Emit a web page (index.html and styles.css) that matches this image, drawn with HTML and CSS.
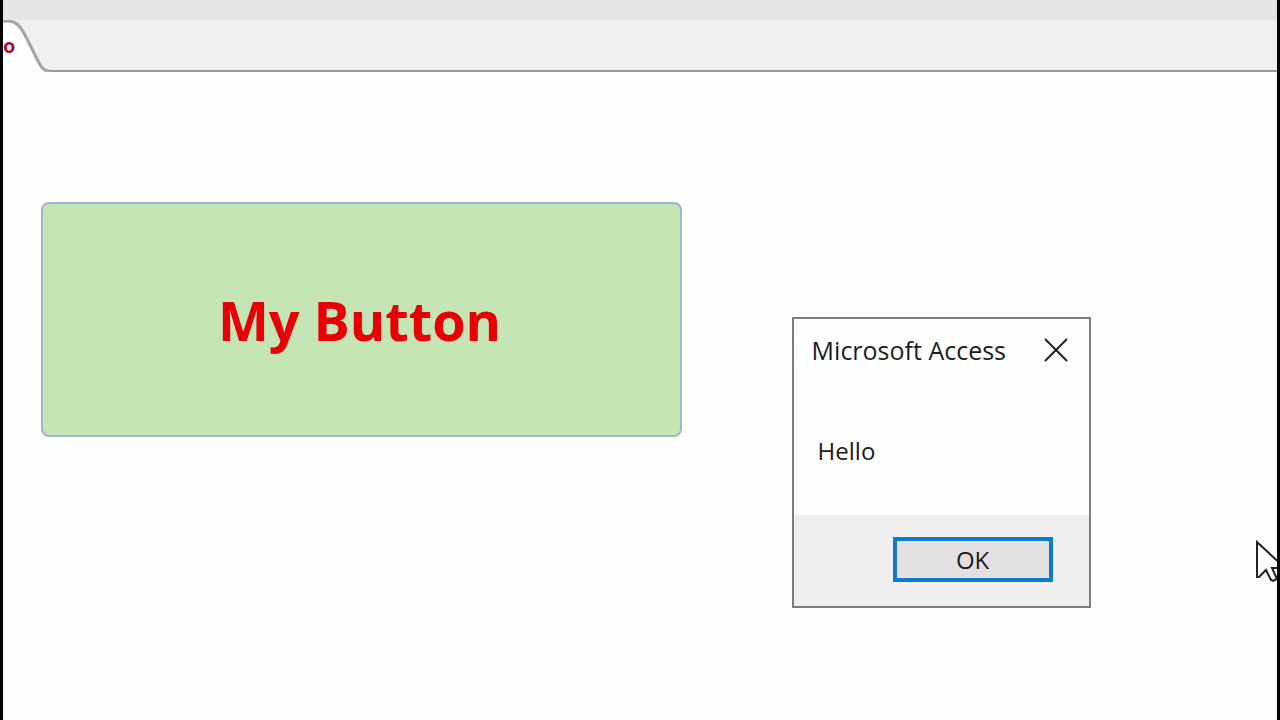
FILE: index.html
```html
<!DOCTYPE html>
<html lang="en">
<head>
  <meta charset="UTF-8">
  <meta name="viewport" content="width=device-width, initial-scale=1.0">
  <title>Microsoft Access</title>
  <link rel="stylesheet" href="styles.css">
</head>
<body>
  <header class="ribbon"></header>

  <nav class="tabs">
    <a class="tab" href="#form">
      <svg class="tab-shape" viewBox="0 0 48 52" aria-hidden="true">
        <path d="M0 1 H3 C13 1 17 5 23 17 L33 37 C38 47 40 51 46 51 H48 V52 H0 Z" fill="#fefefe"/>
        <path d="M0 1 H3 C13 1 17 5 23 17 L33 37 C38 47 40 51 46 51 H48" fill="none" stroke="#a5a5a1" stroke-width="3"/>
      </svg>
      <span class="tab-label">o</span>
    </a>
  </nav>

  <main class="form" id="form">
    <button class="my-button" type="button">My Button</button>

    <div class="msgbox" role="dialog" aria-labelledby="msgTitle">
      <div class="msgbox-title">
        <span id="msgTitle">Microsoft Access</span>
        <button class="close" type="button" aria-label="Close">
          <svg width="24" height="24" viewBox="0 0 24 24">
            <path d="M1 1 L23 23 M23 1 L1 23" stroke="#222" stroke-width="2"/>
          </svg>
        </button>
      </div>
      <p class="msgbox-text">Hello</p>
      <div class="msgbox-footer">
        <button class="ok" type="button">OK</button>
      </div>
    </div>

    <svg class="cursor" width="21" height="44" viewBox="0 0 21 44" aria-hidden="true">
      <path d="M1 2 V37 H3 L10 30 L15 40 L17 41 L21 39 L16 28 H29 Z" fill="#fff" stroke="#222" stroke-width="2"/>
    </svg>
  </main>
</body>
</html>
```
FILE: styles.css
```css
* {
  box-sizing: border-box;
}

body {
  display: flex;
  flex-direction: column;
  min-height: 100vh;
  margin: 0;
  border: solid #000;
  border-width: 0 3px;
  font-family: "Open Sans", "Noto Sans", sans-serif;
  color: #1c1c1c;
  background-color: #fefefe;
}

button {
  font-family: inherit;
  color: inherit;
}

.ribbon {
  height: 20px;
  background-color: #e5e5e5;
}

.tabs {
  height: 52px;
  border-bottom: 2px solid #979596;
  background-color: #f1eff0;
}

.tab {
  display: flex;
  align-items: center;
  position: relative;
  width: 48px;
  height: 52px;
  color: #a5123c;
  text-decoration: none;
  overflow: hidden;
}

.tab-shape {
  position: absolute;
  top: 0;
  left: 0;
  width: 48px;
  height: 52px;
}

.tab-label {
  position: relative;
  font-size: 20px;
  font-weight: bold;
  line-height: 24px;
}

.form {
  flex: 1;
  position: relative;
  padding: 130px 38px;
}

.my-button {
  width: 641px;
  max-width: 100%;
  height: 235px;
  padding: 0 4px 0 0;
  border: 2px solid #a3b4cf;
  border-radius: 8px;
  font-size: 54px;
  font-weight: bold;
  color: #e60008;
  background-color: #c5e6b4;
}

.msgbox {
  position: absolute;
  top: 245px;
  left: 61.9%;
  width: 299px;
  border: 2px solid #7d7d7d;
  background-color: #fefefe;
}

.msgbox-title {
  display: flex;
  justify-content: space-between;
  align-items: center;
  height: 62px;
  padding: 0 21px 0 18px;
  font-size: 25px;
}

.close {
  display: flex;
  padding: 0;
  border: none;
  background: none;
}

.msgbox-text {
  height: 134px;
  margin: 0;
  padding: 54px 24px;
  font-size: 24px;
  line-height: 32px;
}

.msgbox-footer {
  display: flex;
  justify-content: flex-end;
  padding: 22px 36px 24px;
  background-color: #efeff0;
}

.ok {
  width: 160px;
  height: 45px;
  padding: 0;
  border: 4px solid #0f79cb;
  font-size: 24px;
  background-color: #e2e0e1;
}

.cursor {
  position: absolute;
  top: 468px;
  right: 0;
}
```
